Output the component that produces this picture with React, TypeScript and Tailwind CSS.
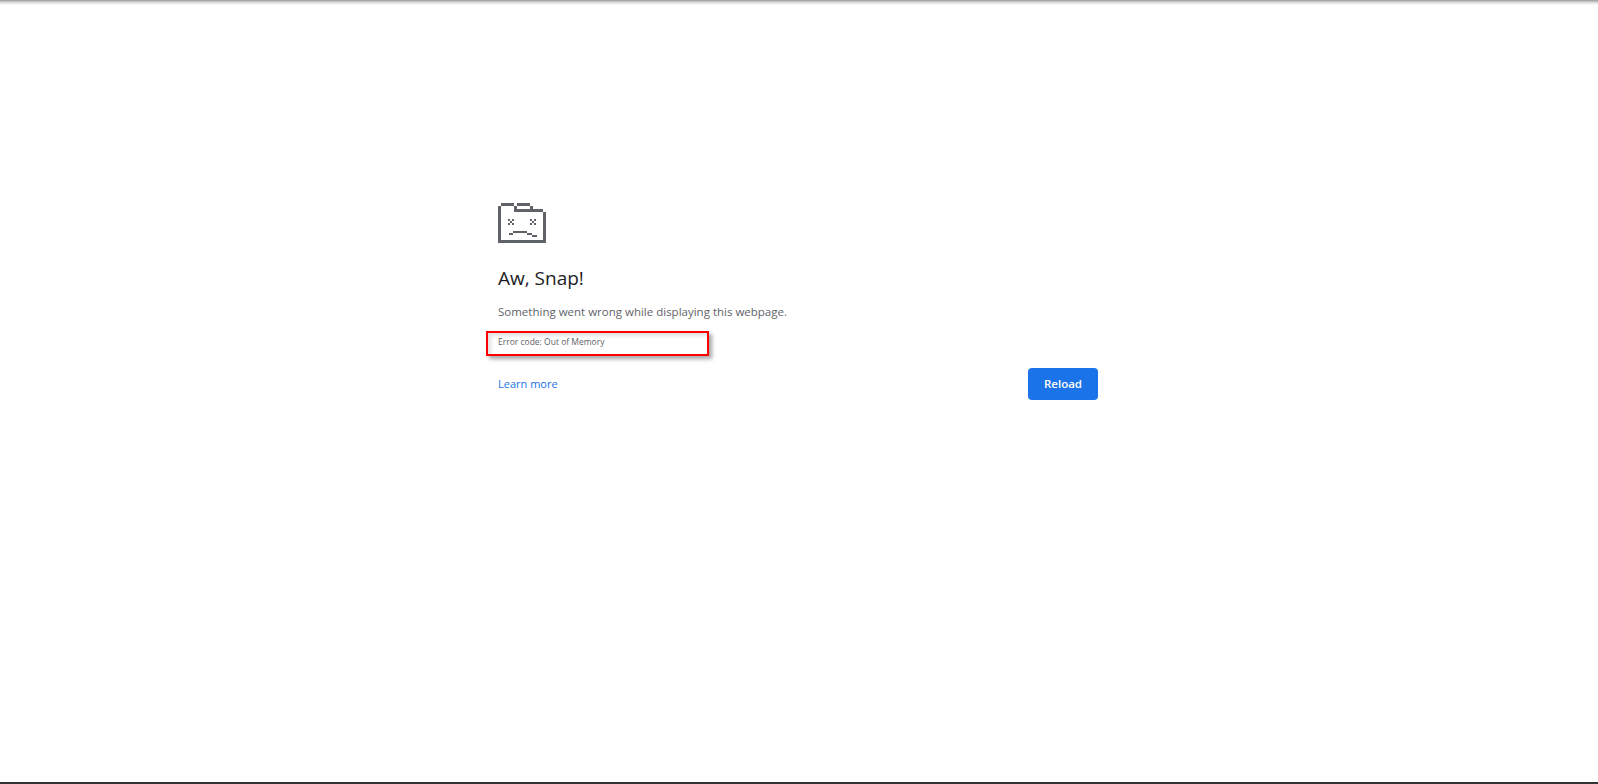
function SadFolder() {
  return (
    <svg width="48" height="40" viewBox="0 0 48 40" fill="#5f6368" shapeRendering="crispEdges" className="block">
      <path d="M3 0h13v3H3zM19 0h13v3H19zM0 3h3v37H0zM3 37h42v3H3zM45 9h3v31h-3zM16 6h29v3H16zM16 3h3v3h-3zM32 3h3v3h-3z" />
      {/* eyes */}
      <path d="M10 16h2v2h-2zM14 16h2v2h-2zM12 18h2v2h-2zM10 20h2v2h-2zM14 20h2v2h-2z" />
      <path d="M32 16h2v2h-2zM36 16h2v2h-2zM34 18h2v2h-2zM32 20h2v2h-2zM36 20h2v2h-2z" />
      {/* mouth */}
      <path d="M11 30h4v2h-4zM15 28h14v2H15zM29 30h5v2h-5zM34 32h5v2h-5z" />
    </svg>
  );
}

function App() {
  return (
    <div className="h-screen w-full flex flex-col bg-white overflow-hidden font-['Open_Sans',sans-serif]">
      <div className="h-[5px] bg-gradient-to-b from-[#9a9a9a] via-[#dcdcdc] to-white" />

      <div className="flex-1 pt-[198px] pl-[498px]">
        <div className="w-[600px]">
          <SadFolder />
          <h1 className="mt-[20px] text-[19px] leading-[30px] font-normal text-[#202124]">Aw, Snap!</h1>
          <p className="mt-[9px] text-[11.5px] leading-[20px] text-[#5f6368]">
            Something went wrong while displaying this webpage.
          </p>
          <div className="relative mt-[10px] h-[20px]">
            <p className="text-[8.5px] leading-[20px] text-[#5f6368]">Error code: Out of Memory</p>
            <div className="absolute left-[-12px] top-[-1px] w-[223px] h-[25px] border-[2px] border-[#ff0000] shadow-[3px_3px_4px_rgba(0,0,0,0.35),inset_3px_3px_4px_rgba(0,0,0,0.12)]" />
          </div>
          <div className="mt-[16px] flex items-center justify-between">
            <a className="text-[11px] leading-[20px] text-[#1a73e8]">Learn more</a>
            <button className="w-[70px] h-[32px] rounded-[4px] bg-[#1a73e8] text-white text-[11.5px] font-semibold">
              Reload
            </button>
          </div>
        </div>
      </div>

      <div className="h-[2px] bg-[#333333]" />
    </div>
  );
}

export default App;
